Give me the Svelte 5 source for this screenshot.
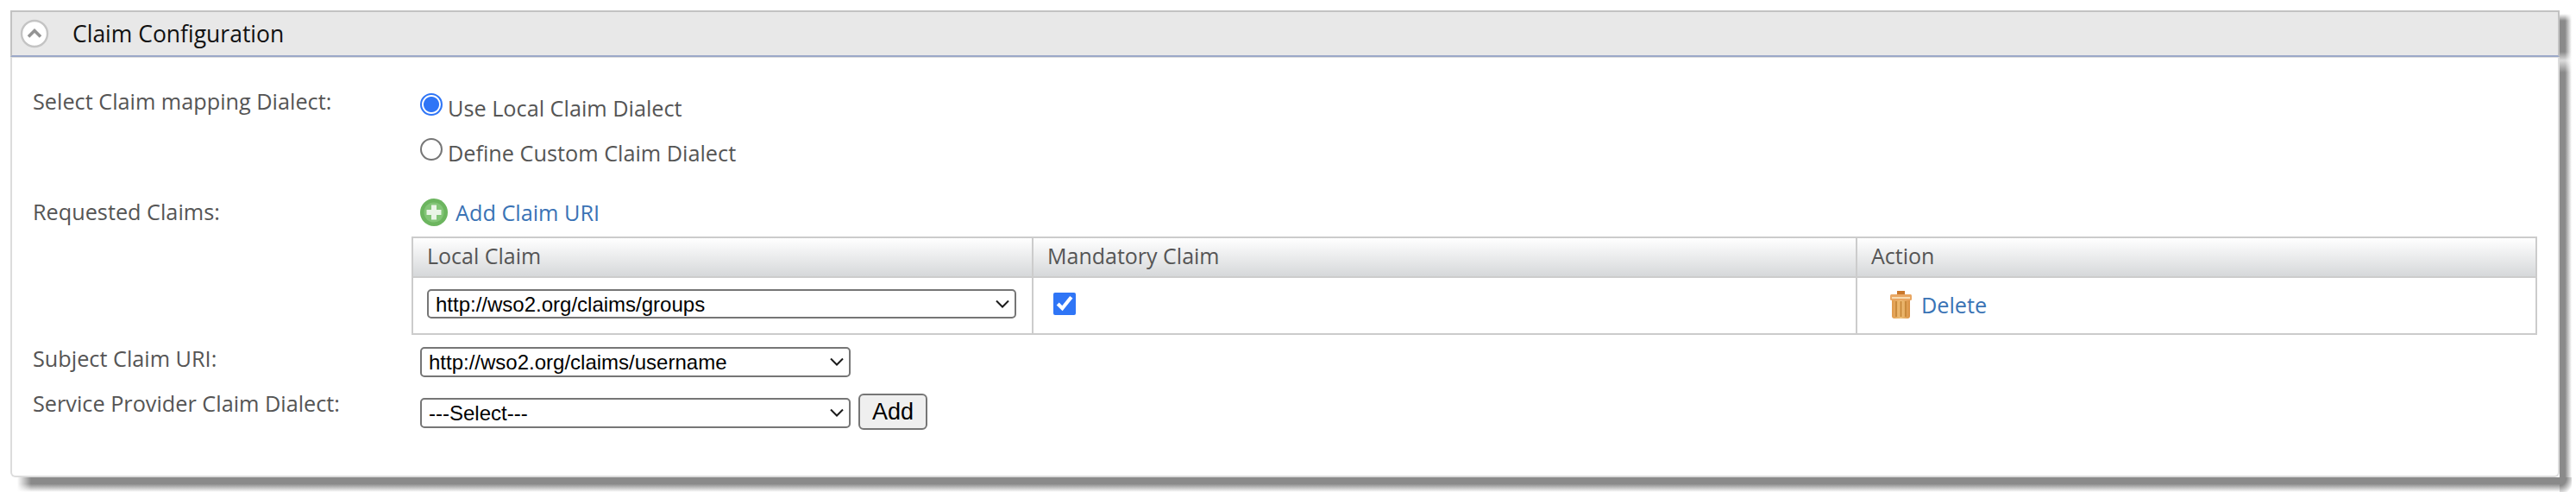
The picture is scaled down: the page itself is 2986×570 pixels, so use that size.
<script>
	const columns = ['Local Claim', 'Mandatory Claim', 'Action'];
	const groupsClaim = 'http://wso2.org/claims/groups';
	const subjectClaim = 'http://wso2.org/claims/username';
</script>

{#snippet chevron()}
	<svg class="chevron" viewBox="0 0 18 12" width="18" height="12" aria-hidden="true">
		<path d="M2 2.5 9 9.5 16 2.5" fill="none" stroke="#1a1a1a" stroke-width="2"/>
	</svg>
{/snippet}

<div class="shell">
	<div class="panel">
		<div class="head">
			<svg class="toggle" viewBox="0 0 34 34" width="34" height="34" aria-hidden="true">
				<circle cx="17" cy="17" r="15" fill="#fff" stroke="#c4c4c4" stroke-width="2.4"/>
				<path d="M10 20.5 17 13.5 24 20.5" fill="none" stroke="#939393" stroke-width="3.6"/>
			</svg>
			<span class="title">Claim Configuration</span>
		</div>

		<div class="body">
			<div class="row dialect">
				<div class="label">Select Claim mapping Dialect:</div>
				<div class="options">
					<label class="opt"><input type="radio" name="dialect" checked /><span>Use Local Claim Dialect</span></label>
					<label class="opt"><input type="radio" name="dialect" /><span>Define Custom Claim Dialect</span></label>
				</div>
			</div>

			<div class="row claims">
				<div class="label">Requested Claims:</div>
				<div class="claims-main">
					<a class="link add" href="#add">
						<svg viewBox="0 0 32 32" width="32" height="32" aria-hidden="true">
							<circle cx="16" cy="16" r="16" fill="#6cb55f"/>
							<circle cx="16" cy="16" r="11.5" fill="#83c577"/>
							<path d="M16 7.5v17M7.5 16h17" stroke="#eaf5e6" stroke-width="6"/>
						</svg>
						Add Claim URI
					</a>
					<table>
						<thead>
							<tr>
								{#each columns as col}<th>{col}</th>{/each}
							</tr>
						</thead>
						<tbody>
							<tr>
								<td>
									<div class="pick wide">
										<select><option>{groupsClaim}</option></select>
										{@render chevron()}
									</div>
								</td>
								<td><input class="check" type="checkbox" checked /></td>
								<td>
									<a class="link del" href="#del">
										<svg viewBox="0 0 27 32" width="27" height="32" aria-hidden="true">
											<defs>
												<linearGradient id="can" x1="0" x2="1" y1="0" y2="0">
													<stop offset="0" stop-color="#e09a4c"/>
													<stop offset="0.5" stop-color="#efc078"/>
													<stop offset="1" stop-color="#d98f42"/>
												</linearGradient>
											</defs>
											<rect x="9" y="0" width="9" height="5" fill="#c9782c"/>
											<rect x="1" y="4" width="25" height="7" rx="1.5" fill="#e9a763"/>
											<rect x="3" y="7" width="21" height="2" fill="#f7dcb4"/>
											<path d="M3 11h21v18q0 3-3 3H6q-3 0-3-3z" fill="url(#can)"/>
											<path d="M8 12v18M13.500 12v18M19 12v18" stroke="#c98a3c" stroke-width="2"/>
										</svg>
										Delete
									</a>
								</td>
							</tr>
						</tbody>
					</table>
				</div>
			</div>

			<div class="row subject">
				<div class="label">Subject Claim URI:</div>
				<div class="pick">
					<select><option>{subjectClaim}</option></select>
					{@render chevron()}
				</div>
			</div>

			<div class="row provider">
				<div class="label">Service Provider Claim Dialect:</div>
				<div class="pick">
					<select><option>---Select---</option></select>
					{@render chevron()}
				</div>
				<button type="button">Add</button>
			</div>
		</div>
	</div>
</div>

<style>
	:global(body) {
		margin: 0;
		background: #fff;
	}
	/* the shell paints the drop shadow: a soft band right of and below the panel */
	.shell {
		box-sizing: border-box;
		width: 2986px;
		height: 570px;
		padding: 12px 0 0 12px;
		overflow: hidden;
		background:
			linear-gradient(#fff, rgba(255, 255, 255, 0) 8px, rgba(255, 255, 255, 0) 44px, rgba(255, 255, 255, 0.7) 54px, rgba(255, 255, 255, 0) 68px) no-repeat 2967px 16px / 14px 70px,
			linear-gradient(to right, #fff, rgba(255, 255, 255, 0)) no-repeat 20px 553px / 16px 17px,
			radial-gradient(ellipse at top left, #8a8a8a 40%, #fff 85%) no-repeat 2967px 553px / 14px 17px,
			linear-gradient(to right, #8a8a8a 45%, #fff) no-repeat 2967px 16px / 14px 537px,
			linear-gradient(#8a8a8a 45%, #fff) no-repeat 20px 553px / 2947px 17px,
			#fff;
	}
	.panel {
		box-sizing: border-box;
		width: 2955px;
		height: 541px;
		border-left: 2px solid #dcdcdc;
		border-right: 2px solid #dcdcdc;
		border-bottom: 2px solid #dcdcdc;
		border-radius: 0 0 6px 6px;
		background: #fff;
		font-family: "Open Sans", sans-serif;
		font-size: 25.25px;
		color: #555;
	}
	.head {
		box-sizing: border-box;
		display: flex;
		align-items: center;
		height: 54px;
		margin: 0 -2px;
		padding-left: 9px;
		background: #e8e8e8;
		border: 2px solid #c2c2c2;
		border-bottom: 2px solid #9ba8c8;
	}
	.title {
		margin-left: 27px;
		font-size: 26.5px;
		color: #111;
	}
	.body {
		padding: 33px 24px 0;
		border-top: 1px solid #dfdfdf;
	}
	.row {
		display: flex;
		align-items: flex-start;
	}
	.label {
		flex: 0 0 449px;
		line-height: 34px;
	}
	.options {
		margin-top: -5px;
	}
	.opt {
		display: flex;
		align-items: center;
		height: 52px;
	}
	.opt span {
		padding-top: 8px;
	}
	.opt input {
		box-sizing: border-box;
		width: 26px;
		height: 26px;
		margin: 0 6px 0 0;
		appearance: none;
		background: #fff;
		border: 2.5px solid #767676;
		border-radius: 50%;
	}
	.opt input:checked {
		border-color: #2f75f6;
		background: radial-gradient(circle, #2f75f6 0 8.5px, #fff 9.5px);
	}
	.claims {
		margin-top: 31px;
	}
	.claims .label {
		margin-top: -2px;
	}
	.claims-main {
		flex: 1;
		min-width: 0;
		margin-left: -10px;
	}
	.link {
		color: #3a73b5;
		text-decoration: none;
	}
	.add {
		display: flex;
		align-items: center;
		gap: 9px;
		margin-left: 10px;
		height: 32px;
	}
	table {
		width: 2464px;
		margin-top: 12px;
		border-collapse: collapse;
		table-layout: fixed;
		border: 2px solid #ccc;
	}
	th {
		box-sizing: border-box;
		height: 46px;
		padding: 0 0 4px 16px;
		font-size: 25px;
		font-weight: 400;
		text-align: left;
		border: 2px solid #ccc;
		background: linear-gradient(#fff, #d6d8da);
	}
	th:nth-child(1) {
		width: 719px;
	}
	th:nth-child(2) {
		width: 955px;
	}
	td {
		height: 64px;
		padding: 0 0 0 16px;
		border: 2px solid #ccc;
	}
	.pick {
		position: relative;
		width: 499px;
		height: 35px;
	}
	.pick.wide {
		width: 683px;
		height: 34px;
		margin-bottom: 4px;
	}
	select {
		box-sizing: border-box;
		display: block;
		width: 100%;
		height: 100%;
		padding: 0 0 0 8px;
		appearance: none;
		background: #fff;
		border: 2px solid #767676;
		border-radius: 5px;
		font-family: "Liberation Sans", Arial, sans-serif;
		font-size: 24px;
		color: #000;
	}
	.chevron {
		position: absolute;
		right: 7px;
		top: 11px;
		pointer-events: none;
	}
	.check {
		display: block;
		width: 26px;
		height: 26px;
		margin: 0 0 4px 7px;
		accent-color: #2f75f6;
	}
	.del {
		display: flex;
		align-items: center;
		gap: 10px;
		margin: 0 0 2px 21px;
	}
	.subject {
		margin-top: 14px;
	}
	.subject .label {
		margin-top: -4px;
	}
	.provider {
		margin-top: 24px;
	}
	.provider .label {
		margin-top: -11px;
	}
	button {
		box-sizing: border-box;
		width: 80px;
		height: 42px;
		margin: -5px 0 0 9px;
		padding: 0;
		background: #efefef;
		border: 2px solid #767676;
		border-radius: 6px;
		font-family: "Liberation Sans", Arial, sans-serif;
		font-size: 27px;
		color: #000;
	}
</style>
